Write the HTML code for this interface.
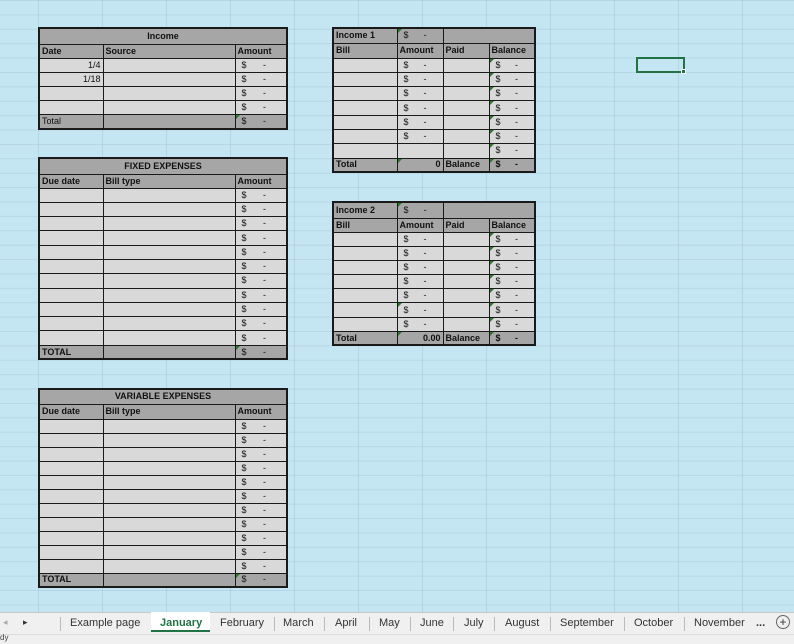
<!DOCTYPE html>
<html><head><meta charset="utf-8"><style>
*{margin:0;padding:0;box-sizing:border-box}
body{width:794px;height:644px;overflow:hidden;position:relative;font-family:"Liberation Sans",sans-serif;
background-color:#c4e6f3;
background-image:linear-gradient(to right,rgba(150,180,195,.35) 1px,transparent 1px),linear-gradient(to bottom,rgba(150,180,195,.3) 1px,transparent 1px);
background-size:64px 100%,100% 14.4px;background-position:38px 0,0 0}
table{position:absolute;border-collapse:collapse;table-layout:fixed;border:2px solid #1a1a1a;font-size:9px;font-weight:bold;color:#111}
td{border:1px solid #1a1a1a;background:#d9d9d9;padding:0 2px;white-space:nowrap;overflow:hidden;line-height:1;position:relative}
.h td,td.h{background:#a6a6a6}
.c{text-align:center}
.r{text-align:right}
.m{font-weight:normal}
.d{font-weight:normal;display:flex;justify-content:space-between;padding:0 18px 0 4px;align-items:center;height:100%}
.g::before{content:"";position:absolute;left:0;top:0;border-top:4px solid #2a7a2a;border-right:4px solid transparent}
.tabs{position:absolute;left:0;top:612px;width:794px;height:22px;background:#f0f0f0;border-top:1px solid #c8c8c8;font-size:11px;color:#333}
.tabs span{position:absolute;top:4px}
.sep{position:absolute;top:4px;width:1px;height:14px;background:#bbb}
.status{position:absolute;left:0;top:634px;width:794px;height:10px;background:#f0f0f0;border-top:1px solid #ddd}
</style></head><body>

<table style="left:38px;top:27px;width:248px">
<col style="width:64px"><col style="width:132px"><col style="width:52px">
<tr class="h" style="height:16px"><td colspan="3" class="c">Income</td></tr>
<tr class="h" style="height:14px"><td>Date</td><td>Source</td><td>Amount</td></tr>
<tr style="height:14px"><td class="r m">1/4</td><td></td><td><div class="d"><span>$</span><span>-</span></div></td></tr>
<tr style="height:14px"><td class="r m">1/18</td><td></td><td><div class="d"><span>$</span><span>-</span></div></td></tr>
<tr style="height:14px"><td></td><td></td><td><div class="d"><span>$</span><span>-</span></div></td></tr>
<tr style="height:14px"><td></td><td></td><td><div class="d"><span>$</span><span>-</span></div></td></tr>
<tr class="h" style="height:15px"><td class="m">Total</td><td></td><td class="g"><div class="d"><span>$</span><span>-</span></div></td></tr>
</table>

<table style="left:38px;top:157px;width:248px">
<col style="width:64px"><col style="width:132px"><col style="width:52px">
<tr class="h" style="height:16px"><td colspan="3" class="c">FIXED EXPENSES</td></tr>
<tr class="h" style="height:14px"><td>Due date</td><td>Bill type</td><td>Amount</td></tr>
<tr style="height:14.3px"><td></td><td></td><td><div class="d"><span>$</span><span>-</span></div></td></tr>
<tr style="height:14.3px"><td></td><td></td><td><div class="d"><span>$</span><span>-</span></div></td></tr>
<tr style="height:14.3px"><td></td><td></td><td><div class="d"><span>$</span><span>-</span></div></td></tr>
<tr style="height:14.3px"><td></td><td></td><td><div class="d"><span>$</span><span>-</span></div></td></tr>
<tr style="height:14.3px"><td></td><td></td><td><div class="d"><span>$</span><span>-</span></div></td></tr>
<tr style="height:14.3px"><td></td><td></td><td><div class="d"><span>$</span><span>-</span></div></td></tr>
<tr style="height:14.3px"><td></td><td></td><td><div class="d"><span>$</span><span>-</span></div></td></tr>
<tr style="height:14.3px"><td></td><td></td><td><div class="d"><span>$</span><span>-</span></div></td></tr>
<tr style="height:14.3px"><td></td><td></td><td><div class="d"><span>$</span><span>-</span></div></td></tr>
<tr style="height:14.3px"><td></td><td></td><td><div class="d"><span>$</span><span>-</span></div></td></tr>
<tr style="height:14.3px"><td></td><td></td><td><div class="d"><span>$</span><span>-</span></div></td></tr>
<tr class="h" style="height:14px"><td>TOTAL</td><td></td><td class="g"><div class="d"><span>$</span><span>-</span></div></td></tr>
</table>

<table style="left:38px;top:388px;width:248px">
<col style="width:64px"><col style="width:132px"><col style="width:52px">
<tr class="h" style="height:15px"><td colspan="3" class="c">VARIABLE EXPENSES</td></tr>
<tr class="h" style="height:15px"><td>Due date</td><td>Bill type</td><td>Amount</td></tr>
<tr style="height:14px"><td></td><td></td><td><div class="d"><span>$</span><span>-</span></div></td></tr>
<tr style="height:14px"><td></td><td></td><td><div class="d"><span>$</span><span>-</span></div></td></tr>
<tr style="height:14px"><td></td><td></td><td><div class="d"><span>$</span><span>-</span></div></td></tr>
<tr style="height:14px"><td></td><td></td><td><div class="d"><span>$</span><span>-</span></div></td></tr>
<tr style="height:14px"><td></td><td></td><td><div class="d"><span>$</span><span>-</span></div></td></tr>
<tr style="height:14px"><td></td><td></td><td><div class="d"><span>$</span><span>-</span></div></td></tr>
<tr style="height:14px"><td></td><td></td><td><div class="d"><span>$</span><span>-</span></div></td></tr>
<tr style="height:14px"><td></td><td></td><td><div class="d"><span>$</span><span>-</span></div></td></tr>
<tr style="height:14px"><td></td><td></td><td><div class="d"><span>$</span><span>-</span></div></td></tr>
<tr style="height:14px"><td></td><td></td><td><div class="d"><span>$</span><span>-</span></div></td></tr>
<tr style="height:14px"><td></td><td></td><td><div class="d"><span>$</span><span>-</span></div></td></tr>
<tr class="h" style="height:14px"><td>TOTAL</td><td></td><td class="g"><div class="d"><span>$</span><span>-</span></div></td></tr>
</table>

<table style="left:332px;top:27px;width:202px">
<col style="width:64px"><col style="width:46px"><col style="width:46px"><col style="width:46px">
<tr class="h" style="height:15px"><td>Income 1</td><td class="g"><div class="d" style="padding-right:14px"><span>$</span><span>-</span></div></td><td colspan="2"></td></tr>
<tr class="h" style="height:15px"><td>Bill</td><td>Amount</td><td>Paid</td><td>Balance</td></tr>
<tr style="height:14.3px"><td></td><td><div class="d" style="padding-right:14px"><span>$</span><span>-</span></div></td><td></td><td class="g"><div class="d" style="padding-right:14px"><span>$</span><span>-</span></div></td></tr>
<tr style="height:14.3px"><td></td><td><div class="d" style="padding-right:14px"><span>$</span><span>-</span></div></td><td></td><td class="g"><div class="d" style="padding-right:14px"><span>$</span><span>-</span></div></td></tr>
<tr style="height:14.3px"><td></td><td><div class="d" style="padding-right:14px"><span>$</span><span>-</span></div></td><td></td><td class="g"><div class="d" style="padding-right:14px"><span>$</span><span>-</span></div></td></tr>
<tr style="height:14.3px"><td></td><td><div class="d" style="padding-right:14px"><span>$</span><span>-</span></div></td><td></td><td class="g"><div class="d" style="padding-right:14px"><span>$</span><span>-</span></div></td></tr>
<tr style="height:14.3px"><td></td><td><div class="d" style="padding-right:14px"><span>$</span><span>-</span></div></td><td></td><td class="g"><div class="d" style="padding-right:14px"><span>$</span><span>-</span></div></td></tr>
<tr style="height:14.3px"><td></td><td><div class="d" style="padding-right:14px"><span>$</span><span>-</span></div></td><td></td><td class="g"><div class="d" style="padding-right:14px"><span>$</span><span>-</span></div></td></tr>
<tr style="height:14.3px"><td></td><td></td><td></td><td class="g"><div class="d" style="padding-right:14px"><span>$</span><span>-</span></div></td></tr>
<tr class="h" style="height:14px"><td>Total</td><td class="g r">0</td><td>Balance</td><td class="g"><div class="d" style="padding-right:14px;font-weight:bold"><span>$</span><span>-</span></div></td></tr>
</table>

<table style="left:332px;top:201px;width:202px">
<col style="width:64px"><col style="width:46px"><col style="width:46px"><col style="width:46px">
<tr class="h" style="height:16px"><td>Income 2</td><td class="g"><div class="d" style="padding-right:14px"><span>$</span><span>-</span></div></td><td colspan="2"></td></tr>
<tr class="h" style="height:14px"><td>Bill</td><td>Amount</td><td>Paid</td><td>Balance</td></tr>
<tr style="height:14.2px"><td></td><td><div class="d" style="padding-right:14px"><span>$</span><span>-</span></div></td><td></td><td class="g"><div class="d" style="padding-right:14px"><span>$</span><span>-</span></div></td></tr>
<tr style="height:14.2px"><td></td><td><div class="d" style="padding-right:14px"><span>$</span><span>-</span></div></td><td></td><td class="g"><div class="d" style="padding-right:14px"><span>$</span><span>-</span></div></td></tr>
<tr style="height:14.2px"><td></td><td><div class="d" style="padding-right:14px"><span>$</span><span>-</span></div></td><td></td><td class="g"><div class="d" style="padding-right:14px"><span>$</span><span>-</span></div></td></tr>
<tr style="height:14.2px"><td></td><td><div class="d" style="padding-right:14px"><span>$</span><span>-</span></div></td><td></td><td class="g"><div class="d" style="padding-right:14px"><span>$</span><span>-</span></div></td></tr>
<tr style="height:14.2px"><td></td><td><div class="d" style="padding-right:14px"><span>$</span><span>-</span></div></td><td></td><td class="g"><div class="d" style="padding-right:14px"><span>$</span><span>-</span></div></td></tr>
<tr style="height:14.2px"><td></td><td class="g"><div class="d" style="padding-right:14px"><span>$</span><span>-</span></div></td><td></td><td class="g"><div class="d" style="padding-right:14px"><span>$</span><span>-</span></div></td></tr>
<tr style="height:14.2px"><td></td><td><div class="d" style="padding-right:14px"><span>$</span><span>-</span></div></td><td></td><td class="g"><div class="d" style="padding-right:14px"><span>$</span><span>-</span></div></td></tr>
<tr class="h" style="height:14px"><td>Total</td><td class="g r">0.00</td><td>Balance</td><td class="g"><div class="d" style="padding-right:14px;font-weight:bold"><span>$</span><span>-</span></div></td></tr>
</table>

<div style="position:absolute;left:636px;top:57px;width:49px;height:16px;border:2px solid #217346"></div>
<div style="position:absolute;left:681px;top:69px;width:5px;height:5px;background:#217346;border:1px solid #fff"></div>

<div class="tabs">
<span style="left:3px;color:#aaa;font-size:9px">◂</span>
<span style="left:23px;font-size:9px">▸</span>
<div class="sep" style="left:60px"></div>
<span style="left:70px">Example page</span>
<div style="position:absolute;left:151px;top:-1px;width:59px;height:20px;background:#fff;border-bottom:2px solid #217346"></div>
<span style="left:160px;color:#217346;font-weight:bold">January</span>
<span style="left:220px">February</span>
<div class="sep" style="left:274px"></div>
<span style="left:283px">March</span>
<div class="sep" style="left:324px"></div>
<span style="left:335px">April</span>
<div class="sep" style="left:369px"></div>
<span style="left:379px">May</span>
<div class="sep" style="left:410px"></div>
<span style="left:420px">June</span>
<div class="sep" style="left:453px"></div>
<span style="left:464px">July</span>
<div class="sep" style="left:494px"></div>
<span style="left:505px">August</span>
<div class="sep" style="left:550px"></div>
<span style="left:560px">September</span>
<div class="sep" style="left:624px"></div>
<span style="left:634px">October</span>
<div class="sep" style="left:684px"></div>
<span style="left:694px">November</span>
<span style="left:756px;font-weight:bold">...</span>
<span style="left:776px;top:2px;width:14px;height:14px;border:1px solid #666;border-radius:50%;text-align:center;line-height:12px;font-size:12px">+</span>
</div>
<div class="status"><span style="position:absolute;left:0;top:-2px;font-size:8px;color:#444">dy</span></div>
</body></html>
